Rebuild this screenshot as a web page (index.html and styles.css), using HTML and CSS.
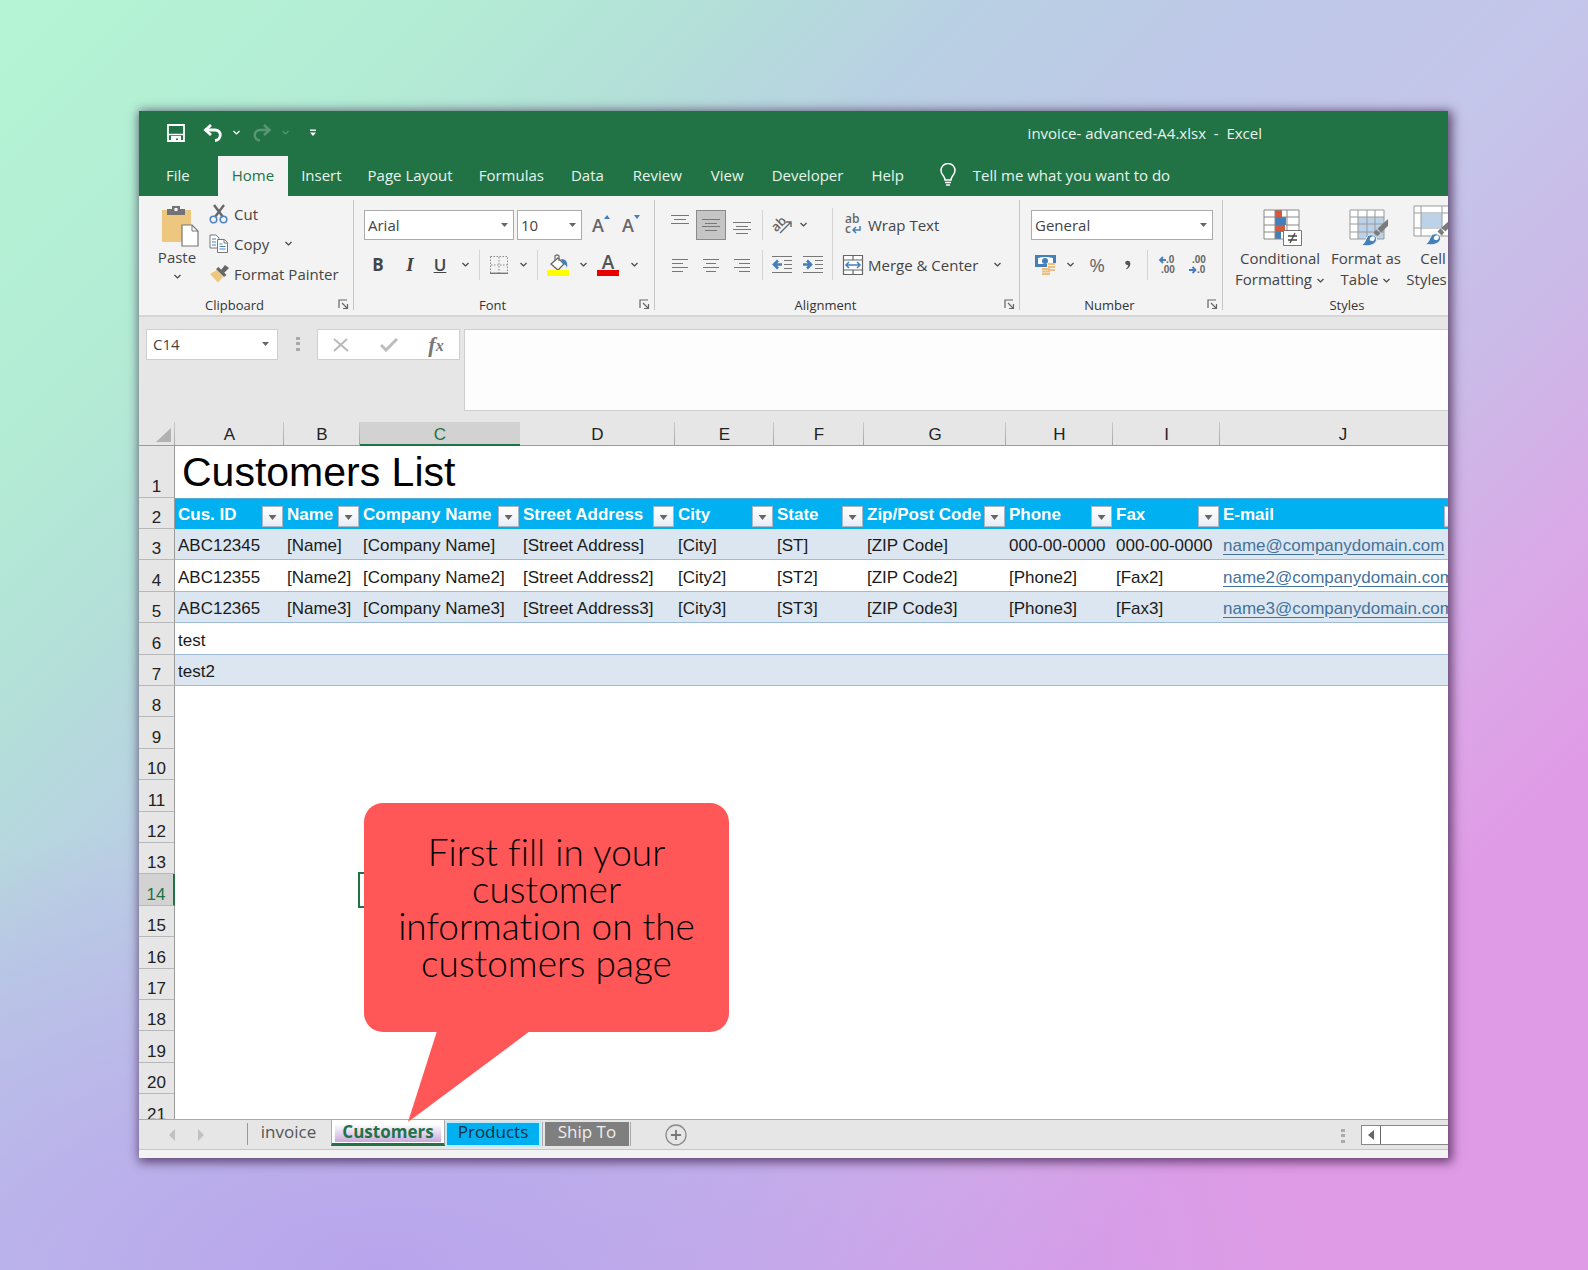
FILE: index.html
```html
<!DOCTYPE html>
<html lang="en">
<head>
<meta charset="utf-8">
<title>invoice- advanced-A4.xlsx - Excel</title>
<link rel="stylesheet" href="styles.css">
</head>
<body>
<svg class="defs" width="0" height="0" aria-hidden="true">
  <symbol id="chev" viewBox="0 0 9 6"><path d="M1.500 1l3 3 3-3" fill="none" stroke="currentColor" stroke-width="1.200"/></symbol>
  <symbol id="launch" viewBox="0 0 11 11"><path d="M1 9V1h8M4 4l5 5M9.500 5v4.500H5" fill="none" stroke="#666" stroke-width="1.200"/></symbol>
  <symbol id="brush" viewBox="0 0 30 30"><path d="M29 1v7l-7 7-4-4z" fill="#7b7b7b"/><path d="M17 12l4 4-3 3-4-4z" fill="#7b7b7b"/><path d="M1 28c5-1 4-7 8-10 4-2 9 1 8 5-1 5-9 7-16 5z" fill="#447fba" stroke="#f3f3f3"/><path d="M10 23c0-3 2-4 4-4 2 1 2 4-1 5z" fill="#fff"/></symbol>
</svg>
<main class="window">
  <header class="titlebar">
    <button class="qa" aria-label="Save"><svg width="18" height="18" viewBox="0 0 18 18"><path d="M1 1h16v16H1z" fill="none" stroke="#fff" stroke-width="1.800"/><path d="M2 10.500h14" stroke="#fff" stroke-width="1.500"/><path d="M4 17v-5h10v5h-3v-2.500H9V17z" fill="#fff"/></svg></button>
    <button class="qa" aria-label="Undo"><svg width="20" height="18" viewBox="0 0 20 18"><path d="M2 6h10c7 0 7 10 0 10.500" fill="none" stroke="#fff" stroke-width="2.800"/><path d="M8 1L2.500 6 8 11" fill="none" stroke="#fff" stroke-width="2.800"/></svg></button>
    <button class="qa qa-drop" aria-label="Undo list"><svg width="9" height="6"><use href="#chev"/></svg></button>
    <button class="qa faded" aria-label="Redo"><svg width="20" height="18" viewBox="0 0 20 18"><path d="M18 6H8c-7 0-7 10 0 10.500" fill="none" stroke="#fff" stroke-width="2.400"/><path d="M12 1l5.500 5L12 11" fill="none" stroke="#fff" stroke-width="2.400"/></svg></button>
    <button class="qa qa-drop faded" aria-label="Redo list"><svg width="9" height="6"><use href="#chev"/></svg></button>
    <button class="qa more" aria-label="Customize"><svg width="8" height="8" viewBox="0 0 8 8"><path d="M1 1.200h6" stroke="#fff" stroke-width="1.400"/><path d="M1 3.500h6L4 7z" fill="#fff"/></svg></button>
    <h1 class="doc">invoice- advanced-A4.xlsx&nbsp; -&nbsp; Excel</h1>
  </header>
  <nav class="tabs">
    <button class="file">File</button><button class="on">Home</button><button class="snug">Insert</button><button class="snug">Page Layout</button><button class="snug">Formulas</button><button>Data</button><button class="loose">Review</button><button>View</button><button>Developer</button><button>Help</button>
    <button class="tell"><svg width="16" height="24" viewBox="0 0 16 24"><path d="M5 17c0-4-4-5-4-9.500a7 7 0 0 1 14 0C15 12 11 13 11 17zM5 19.500h6M6 22h4" fill="none" stroke="#fff" stroke-width="1.500"/></svg>Tell me what you want to do</button>
  </nav>

  <section class="ribbon">
    <div class="group clipboard">
      <div class="body">
        <button class="big paste"><svg width="38" height="42" viewBox="0 0 38 42"><path d="M1 5h29v32H1z" fill="#edc67f"/><path d="M6 4h5V1h8v3h5v6H6z" fill="#747474"/><path d="M13.500 3h3v3h-3z" fill="#fff"/><path d="M21 20h10l6 6v15H21z" fill="#fff" stroke="#777" stroke-width="1.200"/><path d="M31 20v6h6" fill="none" stroke="#777"/></svg>Paste<svg class="under" width="9" height="6"><use href="#chev"/></svg></button>
        <div class="stack">
          <button><svg width="20" height="20" viewBox="0 0 20 20"><path d="M5 1l9 12M15 1L6 13" stroke="#666" stroke-width="2.400"/><circle cx="4.500" cy="15.500" r="3.300" fill="none" stroke="#5484c0" stroke-width="1.600"/><circle cx="14.500" cy="15.500" r="3.300" fill="none" stroke="#5484c0" stroke-width="1.600"/></svg>Cut</button>
          <button><svg width="20" height="20" viewBox="0 0 20 20"><path d="M1 1h6l3 3v10H1z" fill="#fff" stroke="#777"/><path d="M3 5h4M3 8h4M3 11h4" stroke="#4a7fbd"/><path d="M8.500 5.500h7l3 3v10h-10z" fill="#fff" stroke="#777"/><path d="M15 5.500v3.500h3.500" fill="none" stroke="#777"/><path d="M10.500 10h3M10.500 12.500h6M10.500 15h6" stroke="#4a7fbd"/></svg>Copy<svg class="gap" width="9" height="6"><use href="#chev"/></svg></button>
          <button><svg width="20" height="20" viewBox="0 0 20 20"><path d="M8 6l6 7-5 5.500L1 10z" fill="#edc67f"/><path d="M7 5l2.500-2 8 8-2.500 2z" fill="#666"/><path d="M12 6l4-5 4 3-5 5z" fill="#666"/></svg>Format Painter</button>
        </div>
      </div>
      <div class="label">Clipboard<button aria-label="Clipboard options"><svg width="11" height="11"><use href="#launch"/></svg></button></div>
    </div>

    <div class="group font">
      <div class="body rows">
        <div class="row">
          <span class="combo"><select aria-label="Font"><option>Arial</option></select></span>
          <span class="combo size"><select aria-label="Font size"><option>10</option></select></span>
          <button class="letter grow" aria-label="Increase font size">A<svg width="6" height="4" viewBox="0 0 6 4"><path d="M0 4l3-4 3 4z" fill="#447fba"/></svg></button>
          <button class="letter" aria-label="Decrease font size">A<svg width="6" height="4" viewBox="0 0 6 4"><path d="M0 0h6L3 4z" fill="#447fba"/></svg></button>
        </div>
        <div class="row format">
          <button class="glyph"><b>B</b></button><button class="glyph serif"><i>I</i></button><button class="glyph under-line"><u>U</u></button>
          <button aria-label="Underline styles"><svg width="9" height="6"><use href="#chev"/></svg></button>
          <span class="bar"></span>
          <button aria-label="Borders"><svg width="18" height="18" viewBox="0 0 18 18"><path d="M.5.5h17v17M.5.5v17M9 1v16M1 9h16" fill="none" stroke="#888" stroke-dasharray="1.500 1.500"/><path d="M0 17.300h18" stroke="#777" stroke-width="1.400"/></svg></button>
          <button aria-label="Border styles"><svg width="9" height="6"><use href="#chev"/></svg></button>
          <span class="bar"></span>
          <button aria-label="Fill colour"><svg width="22" height="22" viewBox="0 0 22 22"><path d="M4 10l7-6 6 6-6 6z" fill="#fff" stroke="#666" stroke-width="1.300"/><path d="M8 7V2q2-2 4 0v5" fill="none" stroke="#777" stroke-width="1.300"/><path d="M14 5c5 0 7 3 6 9-1-3-2-4-4-4z" fill="#447fba"/><path d="M0 16h22v6H0z" fill="#ff0"/></svg></button>
          <button aria-label="Fill palette"><svg width="9" height="6"><use href="#chev"/></svg></button>
          <button class="ink" aria-label="Font colour">A</button>
          <button aria-label="Font palette"><svg width="9" height="6"><use href="#chev"/></svg></button>
        </div>
      </div>
      <div class="label">Font<button aria-label="Font options"><svg width="11" height="11"><use href="#launch"/></svg></button></div>
    </div>

    <div class="group align">
      <div class="body">
        <div class="cluster">
          <button class="up" aria-label="Top align"><svg width="20" height="9"><path d="M1 .5h18M4 4.500h12M1 8.500h18" stroke="#777"/></svg></button>
          <button class="pressed" aria-label="Middle align"><svg width="20" height="12"><path d="M1 .5h18M4 4.500h12M1 7.500h18M4 11.500h12" stroke="#777"/></svg></button>
          <button class="down" aria-label="Bottom align"><svg width="20" height="12"><path d="M1 .5h18M4 4.500h12M1 7.500h18M4 11.500h12" stroke="#777"/></svg></button>
          <span class="bar"></span>
          <button aria-label="Orientation"><svg width="22" height="20" viewBox="0 0 22 20"><g transform="rotate(-45 8 9)"><text x="0" y="13" class="ab">ab</text></g><path d="M9 18L20 7M15 7h5v5" fill="none" stroke="#666" stroke-width="1.400"/></svg></button>
          <button class="near" aria-label="Orientation list"><svg width="9" height="6"><use href="#chev"/></svg></button>
          <button aria-label="Align left"><svg width="16" height="13"><path d="M0 .5h16M0 4.500h11M0 8.500h16M0 12.500h11" stroke="#777"/></svg></button>
          <button aria-label="Align center"><svg width="18" height="13"><path d="M1 .5h16M4 4.500h10M1 8.500h16M4 12.500h10" stroke="#777"/></svg></button>
          <button aria-label="Align right"><svg width="16" height="13"><path d="M0 .5h16M5 4.500h11M0 8.500h16M5 12.500h11" stroke="#777"/></svg></button>
          <span class="bar"></span>
          <button aria-label="Decrease indent"><svg width="20" height="18" viewBox="0 0 20 18"><path d="M0 .5h20M12 4.500h8M12 8.500h8M12 12.500h8M0 16.500h20" stroke="#777"/><path d="M10 8.500H3M6 4.500l-4 4 4 4" fill="none" stroke="#447fba" stroke-width="2.600"/></svg></button>
          <button aria-label="Increase indent"><svg width="20" height="18" viewBox="0 0 20 18"><path d="M0 .5h20M12 4.500h8M12 8.500h8M12 12.500h8M0 16.500h20" stroke="#777"/><path d="M0 8.500h7M4 4.500l4 4-4 4" fill="none" stroke="#447fba" stroke-width="2.600"/></svg></button>
        </div>
        <div class="stack wide">
          <button><svg width="20" height="20" viewBox="0 0 20 20"><text x="2" y="8" class="tiny">ab</text><text x="2" y="18" class="tiny">c</text><path d="M17 11v4h-6M13 12l-3 3 3 3" fill="none" stroke="#447fba" stroke-width="1.500"/></svg>Wrap Text</button>
          <button><svg width="20" height="20" viewBox="0 0 20 20"><path d="M.5.5h19v19H.5zM.5 5h19M.5 15h19M10 0v5M10 15v5" fill="#fff" stroke="#666" stroke-width="1.200"/><path d="M3 10h14M6 7l-3 3 3 3M14 7l3 3-3 3" fill="none" stroke="#447fba" stroke-width="1.500"/></svg>Merge &amp; Center<svg class="gap" width="9" height="6"><use href="#chev"/></svg></button>
        </div>
      </div>
      <div class="label">Alignment<button aria-label="Alignment options"><svg width="11" height="11"><use href="#launch"/></svg></button></div>
    </div>

    <div class="group number">
      <div class="body rows">
        <div class="row"><span class="combo wide"><select aria-label="Number format"><option>General</option></select></span></div>
        <div class="row numfmt">
          <button aria-label="Accounting format"><svg width="21" height="20" viewBox="0 0 21 20"><path d="M0 0h21v12H0z" fill="#447fba"/><path d="M3 3q7-2 15 0v6H3z" fill="#fff"/><circle cx="10" cy="6" r="3" fill="#447fba"/><path d="M12 8h9v8h-4v4H6v-7h6z" fill="#f3f3f3"/><path d="M13 9h7M13 12h7M13 15h7M7 14h8M7 16.500h8M7 19h8" stroke="#edc07f" stroke-width="2"/></svg></button>
          <button aria-label="Currency list"><svg width="9" height="6"><use href="#chev"/></svg></button>
          <button class="pct">%</button>
          <button class="comma" aria-label="Comma style"><svg width="7" height="10" viewBox="0 0 8 12"><path d="M2 11c5-2 6-10 1-10-4 0-4 5 0 5 1 2 0 3-2 4z" fill="#555"/></svg></button>
          <span class="bar"></span>
          <button aria-label="Increase decimal"><svg width="18" height="20" viewBox="0 0 18 20"><text x="8" y="8" class="dec">.0</text><text x="3" y="18" class="dec">.00</text><path d="M8 5H2M5 2L2 5l3 3" fill="none" stroke="#447fba" stroke-width="1.800"/></svg></button>
          <button aria-label="Decrease decimal"><svg width="18" height="20" viewBox="0 0 18 20"><text x="3" y="8" class="dec">.00</text><text x="8" y="18" class="dec">.0</text><path d="M0 15h6M3.500 12l3 3-3 3" fill="none" stroke="#447fba" stroke-width="1.800"/></svg></button>
        </div>
      </div>
      <div class="label">Number<button aria-label="Number options"><svg width="11" height="11"><use href="#launch"/></svg></button></div>
    </div>

    <div class="group styles">
      <div class="body">
        <button class="big"><svg width="40" height="38" viewBox="0 0 40 38"><path d="M1 1h35v29H1z" fill="#fff"/><path d="M12 1h7v7h-7zM12 16h10v7H12z" fill="#d35b3c"/><path d="M12 8h11v8H12zM12 23h6v7h-6z" fill="#447fba"/><path d="M1 1h35v29H1zM12 1v29M24 1v29M1 8h11M1 16h11M1 23h11M19 8h17M23 16h13M22 23h14" fill="none" stroke="#888"/><path d="M20.500 21.500h18v15h-18z" fill="#fff" stroke="#777"/><path d="M25 27h9M25 31h9M32 24l-5 10" stroke="#444" stroke-width="1.300"/></svg><span>Conditional<br>Formatting <svg width="9" height="8"><use href="#chev"/></svg></span></button>
        <button class="big"><svg width="40" height="38" viewBox="0 0 40 38"><path d="M1 1h34v29H1z" fill="#fff"/><path d="M9 8h26v22H9z" fill="#bcd2e8"/><path d="M1 1h34v29H1zM9 1v29M18 1v29M26 1v29M1 8h34M1 15h34M1 23h34" fill="none" stroke="#999"/><svg x="11" y="9" width="29" height="29"><use href="#brush"/></svg></svg><span>Format as<br>Table <svg width="9" height="8"><use href="#chev"/></svg></span></button>
        <button class="big cell"><svg width="40" height="42" viewBox="0 0 40 42"><path d="M1 1h36v30H1z" fill="#fff"/><path d="M8 9h21v13H8z" fill="#bcd2e8"/><path d="M1 1h36v30H1zM8 1v30M29 1v30M1 8h36M1 23h36" fill="none" stroke="#999"/><svg x="11" y="12" width="29" height="29"><use href="#brush"/></svg></svg><span>Cell<br>Styles <svg width="9" height="8"><use href="#chev"/></svg></span></button>
      </div>
      <div class="label">Styles</div>
    </div>
  </section>

  <section class="formula">
    <span class="combo name"><input aria-label="Name box" value="C14"></span>
    <svg class="dots" width="4" height="16"><path d="M0 1h4v3H0zM0 6h4v3H0zM0 12h4v3H0z" fill="#aaa"/></svg>
    <div class="fx">
      <button aria-label="Cancel"><svg width="16" height="14" viewBox="0 0 16 14"><path d="M1 1l14 12M14 1L1 13" stroke="#b9b9b9" stroke-width="2"/></svg></button>
      <button aria-label="Enter"><svg width="18" height="14" viewBox="0 0 18 14"><path d="M1 7l5 5L17 1" fill="none" stroke="#bdbdbd" stroke-width="3"/></svg></button>
      <button class="fn"><i>f</i><i class="x">x</i></button>
    </div>
    <textarea class="entry" aria-label="Formula"></textarea>
  </section>

  <section class="sheet">
    <table>
      <colgroup><col class="cr"><col class="ca"><col class="cb"><col class="cc"><col class="cd"><col class="ce"><col class="cf"><col class="cg"><col class="ch"><col class="ch"><col class="cj"></colgroup>
      <thead><tr><th class="corner"></th><th>A</th><th>B</th><th class="sel">C</th><th>D</th><th>E</th><th>F</th><th>G</th><th>H</th><th>I</th><th>J</th></tr></thead>
      <tbody class="top">
        <tr class="title"><th>1</th><td colspan="10">Customers List</td></tr>
        <tr class="fields"><th>2</th>
          <td><div>Cus. ID<button aria-label="Filter ID"></button></div></td><td><div>Name<button aria-label="Filter name"></button></div></td><td><div>Company Name<button aria-label="Filter company"></button></div></td><td><div>Street Address<button aria-label="Filter street"></button></div></td><td><div>City<button aria-label="Filter city"></button></div></td><td><div>State<button aria-label="Filter state"></button></div></td><td><div>Zip/Post Code<button aria-label="Filter zip"></button></div></td><td><div>Phone<button aria-label="Filter phone"></button></div></td><td><div>Fax<button aria-label="Filter fax"></button></div></td><td><div>E-mail<button aria-label="Filter e-mail"></button></div></td></tr>
      </tbody>
      <tbody class="grid">
        <tr class="rec band"><th>3</th><td>ABC12345</td><td>[Name]</td><td>[Company Name]</td><td>[Street Address]</td><td>[City]</td><td>[ST]</td><td>[ZIP Code]</td><td>000-00-0000</td><td>000-00-0000</td><td><a href="#">name@companydomain.com</a></td></tr>
        <tr class="rec"><th>4</th><td>ABC12355</td><td>[Name2]</td><td>[Company Name2]</td><td>[Street Address2]</td><td>[City2]</td><td>[ST2]</td><td>[ZIP Code2]</td><td>[Phone2]</td><td>[Fax2]</td><td><a href="#">name2@companydomain.com</a></td></tr>
        <tr class="rec band"><th>5</th><td>ABC12365</td><td>[Name3]</td><td>[Company Name3]</td><td>[Street Address3]</td><td>[City3]</td><td>[ST3]</td><td>[ZIP Code3]</td><td>[Phone3]</td><td>[Fax3]</td><td><a href="#">name3@companydomain.com</a></td></tr>
        <tr class="rec"><th>6</th><td>test</td><td colspan="9"></td></tr>
        <tr class="rec band"><th>7</th><td>test2</td><td colspan="9"></td></tr>
        <tr><th>8</th><td colspan="10"></td></tr>
        <tr><th>9</th><td colspan="10"></td></tr>
        <tr><th>10</th><td colspan="10"></td></tr>
        <tr><th>11</th><td colspan="10"></td></tr>
        <tr><th>12</th><td colspan="10"></td></tr>
        <tr><th>13</th><td colspan="10"></td></tr>
        <tr class="current"><th>14</th><td></td><td></td><td class="active"></td><td colspan="7"></td></tr>
        <tr><th>15</th><td colspan="10"></td></tr>
        <tr><th>16</th><td colspan="10"></td></tr>
        <tr><th>17</th><td colspan="10"></td></tr>
        <tr><th>18</th><td colspan="10"></td></tr>
        <tr><th>19</th><td colspan="10"></td></tr>
        <tr><th>20</th><td colspan="10"></td></tr>
        <tr><th>21</th><td colspan="10"></td></tr>
      </tbody>
    </table>
  </section>

  <footer class="sheetbar">
    <button class="nav" aria-label="Previous sheet"><svg width="6" height="12"><path d="M6 0v12L0 6z" fill="#c0c0c0"/></svg></button>
    <button class="nav" aria-label="Next sheet"><svg width="6" height="12"><path d="M0 0v12l6-6z" fill="#c0c0c0"/></svg></button>
    <button class="tab plain">invoice</button><button class="tab chosen"><span>Customers</span></button><button class="tab blue">Products</button><span class="rule"></span><button class="tab gray">Ship To</button><span class="rule"></span>
    <button class="add" aria-label="New sheet"><svg width="22" height="22" viewBox="0 0 22 22"><circle cx="11" cy="11" r="10" fill="none" stroke="#8a8a8a" stroke-width="1.300"/><path d="M11 6v10M6 11h10" stroke="#777" stroke-width="1.800"/></svg></button>
    <svg class="dots end" width="4" height="16"><path d="M0 1h4v3H0zM0 6h4v3H0zM0 12h4v3H0z" fill="#aaa"/></svg>
    <div class="scroll"><button aria-label="Scroll left"><svg width="6" height="10"><path d="M6 0v10L0 5z" fill="#666"/></svg></button></div>
  </footer>
  <div class="status"></div>

  <aside class="callout"><p>First fill in your customer information on the customers page</p><svg width="94" height="91" viewBox="0 0 94 91"><path d="M29 0h93L0 91z" fill="#ff5757"/></svg></aside>
</main>
</body>
</html>
```
FILE: styles.css
```css
* { box-sizing: border-box; }
body {
  margin: 0;
  min-height: 100vh;
  display: flex;
  padding: 111px 140px 112px 139px;
  font: 15px/20px "Open Sans", "Noto Sans", sans-serif;
  color: #444;
  background:
    radial-gradient(60% 36% at 24% 100%, #b8a4ec, rgba(184, 164, 236, 0)),
    linear-gradient(135deg, #b5f5d4 0%, #b3ecd5 16%, #b3e0d8 25%, #b9d0e3 34%, #bec8e8 44%, #c4c6ea 55%, #cabbe8 64%, #daa9e7 74%, #e09be6 82%, #e09be6 100%);
}
button, select, input, textarea { font: inherit; color: inherit; border: 0; padding: 0; margin: 0; background: none; border-radius: 0; }
button { display: flex; align-items: center; justify-content: center; white-space: nowrap; flex: none; }
svg { flex: none; }
.defs { position: absolute; }

.window {
  position: relative;
  flex: 1;
  min-width: 0;
  height: calc(100vh - 223px);
  min-height: 640px;
  display: flex;
  flex-direction: column;
  background: #e6e6e6;
  box-shadow: 2px 2px 10px 2px rgba(50, 20, 60, .7);
}
.window > * { flex: none; }
.window > .sheet { flex: 1; }

/* Title bar */
.titlebar { height: 45px; display: flex; align-items: center; padding: 0 0 2px 22px; background: #217346; color: #fff; overflow: hidden; }
.qa { width: 30px; height: 40px; margin-right: 7px; }
.qa-drop { width: 16px; margin: 0 3px 0 -7px; }
.more { width: 34px; }
.faded { opacity: .25; }
.doc { margin: 0 186px 0 auto; font-size: 15px; font-weight: 400; color: #e8f3ec; white-space: nowrap; }

.tabs { height: 40px; display: flex; background: #217346; color: #e8f3ec; overflow: hidden; }
.tabs button { padding: 0 14px 2px; }
.tabs .snug { padding: 0 13px 2px; }
.tabs .loose { padding: 0 15px 2px; }
.tabs .file { padding: 0 28px 2px 27px; }
.tabs .on { background: #f3f3f3; color: #217346; }
.tabs .tell { gap: 17px; padding: 0 22px 2px; }

/* Ribbon */
.ribbon { display: flex; padding-top: 4px; background: #f3f3f3; border-bottom: 2px solid #d6d6d6; overflow: hidden; }
.group { flex: none; background: linear-gradient(#c6c6c6, #c6c6c6) right top / 1px 110px no-repeat; }
.clipboard { width: 215px; }
.font { width: 301px; }
.align { width: 365px; }
.number { width: 203px; }
.styles { width: 248px; background: none; }
.body { height: 90px; display: flex; }
.rows { display: block; padding: 5px 0 0 10px; }
.number .rows { padding-left: 11px; }
.row { height: 40px; display: flex; align-items: center; }
.label { position: relative; height: 25px; padding: 5px 24px 0 0; font-size: 13px; text-align: center; color: #333; }
.label button { position: absolute; right: 5px; top: 9px; }

.big { flex-direction: column; justify-content: flex-start; line-height: 21px; }
.paste { width: 54px; margin-left: 11px; padding-top: 5px; }
.paste svg:first-child { margin-left: 6px; }
.under { margin-top: 6px; }
.stack { display: grid; grid-template-rows: 30px 30px 30px; justify-items: start; margin-left: 5px; }
.stack button { gap: 5px; padding-bottom: 2px; }
.stack .gap { margin-left: 10px; }
.stack.wide { grid-template-rows: 40px 40px; padding-top: 5px; margin-left: 10px; }
.stack.wide button { padding-bottom: 0; }

.combo { position: relative; display: block; width: 150px; height: 30px; border: 1px solid #ababab; background: #fff; }
.combo select, .combo input { width: 100%; height: 100%; padding: 0 3px; appearance: none; outline: 0; }
.combo::after { content: ""; position: absolute; right: 5px; top: 12px; width: 7px; height: 4px; background: #666; clip-path: polygon(0 0, 100% 0, 50% 100%); pointer-events: none; }
.combo.size { width: 65px; margin-left: 3px; }
.combo.wide { width: 182px; }
.letter { width: 30px; font-size: 18px; font-weight: 600; color: #666; }
.letter svg { align-self: flex-start; }
.grow { margin-left: 4px; }
.format { display: grid; grid-template-columns: 28px 32px 32px 18px 10px 30px 18px 10px 32px 18px 32px 20px; }
.format button, .numfmt button { height: 30px; }
.glyph { font-size: 17px; }
.under-line { font-weight: 600; }
.serif { font-family: "Liberation Serif", serif; font-size: 19px; font-weight: 700; padding-left: 4px; }
.format .ink { height: 22px; width: 22px; margin: 0 5px; padding-bottom: 1px; border-bottom: 6px solid #e80000; font-size: 19px; font-weight: 600; line-height: 16px; color: #555; }
.bar { width: 1px; height: 30px; justify-self: center; align-self: center; background: #d4d4d4; }
.cluster { display: grid; grid-template-columns: 30px 32px 30px 10px 30px 32px; grid-template-rows: 40px 40px; padding: 5px 4px 0 10px; background: linear-gradient(#d4d4d4, #d4d4d4) right 8px / 1px 72px no-repeat; }
.pressed { width: 30px; height: 30px; place-self: center; background: #c5c5c5; border: 1px solid #8a8a8a; }
.up { padding-bottom: 12px; }
.down { padding-top: 6px; }
.near { justify-self: start; width: 12px; }
.ab { font: 600 13px "Open Sans", sans-serif; fill: #666; }
.tiny { font: 600 12px "Open Sans", sans-serif; fill: #666; }
.dec { font: 600 10px "Liberation Sans", sans-serif; fill: #666; }
.cluster svg, .numfmt svg, .stack svg { overflow: visible; }
.numfmt { display: grid; grid-template-columns: 28px 22px 32px 30px 8px 32px 30px; }
.pct { font-size: 19px; color: #666; }

.styles .body { padding: 9px 0 0 8px; }
.styles .big { width: 98px; text-align: center; padding-top: 0; }
.styles .big > svg { margin: 0 0 1px 6px; }
.styles .big + .big { width: 74px; }
.styles .big.cell { margin-top: -4px; width: 60px; }
.styles .big.cell > svg { margin-left: 0; }
.styles .label { padding-right: 0; }

/* Formula bar */
.formula { display: flex; align-items: flex-start; height: 105px; padding: 12px 0 0 7px; overflow: hidden; }
.combo.name { width: 132px; height: 31px; border-color: #cfcfcf; }
.name::after { right: 8px; }
.name input { padding: 0 6px 2px; }
.dots { margin: 7px 17px 0 18px; }
.fx { display: flex; width: 143px; height: 31px; justify-content: space-around; background: #fff; border: 1px solid #cfcfcf; }
.fn { font: 700 22px/26px "Liberation Serif", serif; color: #777; }
.fn .x { font-size: 16px; align-self: flex-end; }
.entry { flex: 1; height: 82px; margin-left: 4px; background: #fdfdfd; border: 1px solid #cfcfcf; border-right: 0; resize: none; outline: 0; }

/* Worksheet */
.sheet { min-height: 0; overflow: hidden; background: #fff; font: 17px/20px "Liberation Sans", Arial, sans-serif; color: #1a1a1a; }
table { table-layout: fixed; width: 1327px; border-collapse: separate; border-spacing: 0; }
.cr { width: 36px; } .ca { width: 109px; } .cb { width: 76px; } .cc { width: 160px; } .cd { width: 155px; }
.ce { width: 99px; } .cf { width: 90px; } .cg { width: 142px; } .ch { width: 107px; } .cj { width: 246px; }
th, td { padding: 0; font-weight: 400; white-space: nowrap; }
thead th { height: 24px; padding-top: 3px; line-height: 18px; background: linear-gradient(#c9c9c9, #a8a8a8) right / 1px 100% no-repeat #e6e6e6; border-bottom: 1px solid #9b9b9b; color: #222; }
thead .sel { background: #d2d2d2; border-bottom: 2px solid #217346; color: #217346; }
.corner { position: relative; }
.corner::after { content: ""; position: absolute; right: 4px; bottom: 3px; width: 15px; height: 14px; background: #b1b1b1; clip-path: polygon(100% 0, 100% 100%, 0 100%); }
tbody th { vertical-align: bottom; background: #e6e6e6; border-right: 1px solid #9b9b9b; border-bottom: 1px solid #b8b8b8; color: #222; }
.title th { height: 52px; }
.title td { padding-left: 7px; font-size: 41px; line-height: 50px; color: #000; }
.fields th { height: 31px; }
.fields td { background: #00b0f0; border-top: 1px solid #53a9d8; color: #fff; font-weight: 700; }
.fields div { display: flex; height: 30px; padding: 6px 1px 2px 3px; justify-content: space-between; overflow: hidden; }
.fields button { align-self: flex-end; width: 21px; height: 21px; margin-left: -4px; background: linear-gradient(#fff, #e9edf3); border: 1px solid #a9b8c9; }
.fields button::after { content: ""; width: 8px; height: 5px; margin-top: 2px; background: #666; clip-path: polygon(0 0, 100% 0, 50% 100%); }
.grid th { height: 31px; }
.grid tr:nth-child(5n+2) th, .grid tr:nth-child(5n+4) th { height: 32px; }
.rec td { padding: 4px 0 0 3px; border-bottom: 1px solid #9fbbdb; }
.band td { background: #dce6f1; }
.rec a { color: #44739b; text-decoration: underline; text-underline-offset: 3px; }
.current th { background: #d2d2d2; color: #217346; border-right: 2px solid #217346; }
.active { outline: 2px solid #217346; }

/* Sheet tabs */
.sheetbar { display: flex; height: 31px; padding-left: 30px; border-top: 1px solid #ababab; border-bottom: 1px solid #c6c6c6; font-size: 17px; color: #555; overflow: hidden; }
.nav { width: 6px; margin-right: 23px; }
.tab { align-self: flex-start; }
.plain { width: 84px; height: 22px; margin: 3px 0 0 20px; padding: 0 2px 5px 0; border-left: 1px solid #999; }
.chosen { width: 114px; height: 27px; padding: 3px 3px 2px; margin-top: -1px; background: #fff; border: 1px solid #aaa; border-width: 0 1px 3px; border-bottom-color: #217346; color: #217346; font-weight: 700; }
.chosen span { width: 100%; height: 20px; background: linear-gradient(#fff 10%, #c9a9dc); line-height: 19px; }
.blue { width: 96px; height: 26px; margin-top: 1px; padding-bottom: 5px; background: #00b0f0; border: 2px solid #bfeafb; color: #10303f; }
.rule { width: 1px; height: 24px; margin: 2px 2px 0 1px; background: #aaa; }
.gray { width: 84px; height: 24px; margin-top: 2px; padding-bottom: 5px; background: #7f7f7f; color: #eee; }
.add { margin-left: 32px; width: 22px; }
.dots.end { margin: 8px 16px 0 auto; }
.scroll { width: 87px; height: 20px; margin-top: 5px; background: #fff; border: 1px solid #888; border-right: 0; display: flex; }
.scroll button { width: 19px; border-right: 1px solid #666; }
.status { height: 8px; background: #f3f3f3; }

/* Annotation lying over the sheet */
.callout { position: absolute; left: 225px; top: 692px; width: 365px; height: 229px; padding: 30px 20px 0; background: #ff5757; border-radius: 19px; }
.callout p { margin: 0; font: 300 37px/37px Lato, sans-serif; font-variant-ligatures: none; color: #000; text-align: center; }
.callout svg { position: absolute; left: 44px; top: 228px; overflow: visible; }
```
